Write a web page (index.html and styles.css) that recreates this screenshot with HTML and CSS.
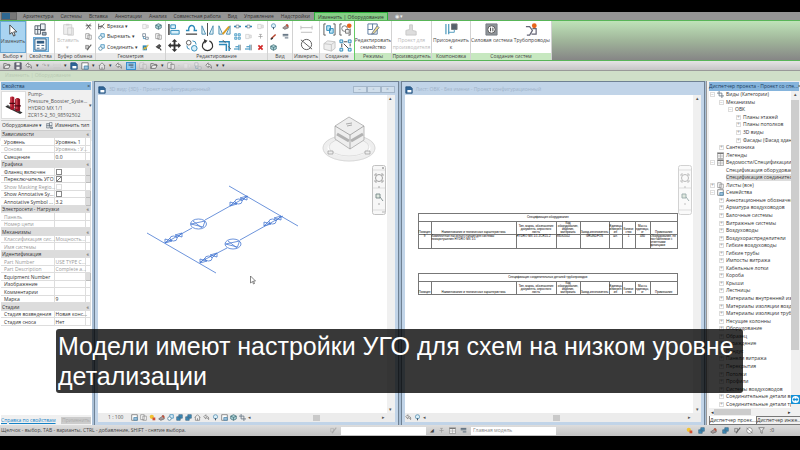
FILE: index.html
```html
<!DOCTYPE html>
<html lang="ru">
<head>
<meta charset="utf-8">
<title>Изменить | Оборудование</title>
<link rel="stylesheet" href="styles.css">
</head>
<body>
<svg class="defs" aria-hidden="true">
  <symbol id="cursor" viewBox="0 0 10 14"><path d="M1 1v10l2.500-2 1.600 4 1.700-.8-1.600-3.700h3.300z" fill="#fff" stroke="#444"/></symbol>
  <symbol id="types" viewBox="0 0 14 14"><path d="M1 3h6v9H1zM7 1h5v7H7z" fill="#eef3f7" stroke="#56616d"/><path d="M1 7h11M4 3v9M9 10h4v3H9z" fill="#9eb4c6" stroke="#56616d"/></symbol>
  <symbol id="props" viewBox="0 0 14 14"><path d="M1 1h12v12H1z" fill="#fff" stroke="#28567e"/><path d="M3 3h8v3H3z" fill="#315c82"/><path d="M3 8h3M3 11h3M8 8h3M8 11h3" stroke="#315c82"/></symbol>
  <symbol id="sheet" viewBox="0 0 14 14"><path d="M1 1h12v12H1z" fill="#eee" stroke="#777"/><path d="M1 2h12v2H1z" fill="#777"/><path d="M1 8h12M7 4v9" stroke="#999"/></symbol>
  <symbol id="paste" viewBox="0 0 14 16"><path d="M1 2h10v12H1zM6 6h7v9H6z" fill="#eee" stroke="#ccc"/><path d="M4 1h4v2H4z" fill="#ccc"/></symbol>
  <symbol id="x" viewBox="0 0 10 10"><path d="M2 1l6 8M8 1L2 9M1 4h8" stroke="#555" stroke-width="1.300" fill="none"/></symbol>
  <symbol id="copy" viewBox="0 0 10 10"><path d="M1 1h5v7H1zM4 3h5v6H4z" fill="#fff" stroke="#888"/></symbol>
  <symbol id="brush" viewBox="0 0 10 10"><path d="M1 2h4v5H1z" fill="#ccc" stroke="#777"/><path d="M9 1L5 6 3 9" stroke="#666" stroke-width="1.600" fill="none"/></symbol>
  <symbol id="cut" viewBox="0 0 10 10"><path d="M1 1v8M1 5h4M9 1L3 8M4 3l5 5" stroke="#555" stroke-width="1.300" fill="none"/></symbol>
  <symbol id="join" viewBox="0 0 10 10"><path d="M4 1h5v5H4z" fill="#d9edf8" stroke="#2c83b4"/><circle cx="3.500" cy="6.500" r="2.500" fill="#fff" stroke="#3c7695"/></symbol>
  <symbol id="cube" viewBox="0 0 10 10"><path d="M1 3l4-2 4 2v4L5 9 1 7z" fill="#a9cfd5" stroke="#3c6a73"/><path d="M1 3l4 2 4-2M5 5v4" stroke="#3c6a73" fill="none"/></symbol>
  <symbol id="pale" viewBox="0 0 10 10"><path d="M1 2h5v6H1zM7 3h2v4H7z" fill="#f5f5f5" stroke="#ccc"/></symbol>
  <symbol id="shapes" viewBox="0 0 10 10"><path d="M1 1h4v4H1zM5 6h4v3H5z" fill="#fff" stroke="#678"/><path d="M2 5v3h3" fill="none" stroke="#2878a8"/></symbol>
  <symbol id="paint" viewBox="0 0 10 10"><path d="M1 2h6v7H1z" fill="#2d86b8"/><path d="M2 8l2-3 1 2 4-6" stroke="#e1b83c" stroke-width="1.500" fill="none"/></symbol>
  <symbol id="hammer" viewBox="0 0 10 10"><path d="M2 4l4-3 2 2-3 3zM5 4l4 5" stroke="#444" stroke-width="1.500" fill="#666"/></symbol>
  <symbol id="align" viewBox="0 0 14 14"><path d="M1 1v12" stroke="#333" stroke-width="1.500"/><path d="M3 2h5v4H3zM3 8h9v4H3z" fill="#d9f0fa" stroke="#2c88b8"/></symbol>
  <symbol id="offset" viewBox="0 0 14 14"><path d="M1 8h3c-1-7 8-7 6 0h3" fill="none" stroke="#2c88b8" stroke-width="1.500"/><path d="M1 12h12" stroke="#555" stroke-width="1.500"/></symbol>
  <symbol id="mirror" viewBox="0 0 14 14"><path d="M1 12V3l4 9zM13 12V3L9 12z" fill="#e5f4fa" stroke="#4a8daf"/><path d="M7 0v14" stroke="#444"/></symbol>
  <symbol id="mirror2" viewBox="0 0 14 14"><path d="M1 12V3l4 9zM13 12V3L9 12z" fill="#e5f4fa" stroke="#4a8daf"/><path d="M12 4L5 12" stroke="#d89c25" stroke-width="2"/></symbol>
  <symbol id="move" viewBox="0 0 14 14"><path d="M7 0l3 3H8v3h3V4l3 3-3 3V8H8v3h2l-3 3-3-3h2V8H3v2L0 7l3-3v2h3V3H4z" fill="#333"/></symbol>
  <symbol id="copy2" viewBox="0 0 14 14"><circle cx="4" cy="4" r="2.500" fill="#fff" stroke="#555"/><circle cx="10" cy="10" r="3" fill="#d6effa" stroke="#2c88b8"/><path d="M8 2q4 0 4 4M2 7q0 4 3 4" fill="none" stroke="#2c88b8"/></symbol>
  <symbol id="rotate" viewBox="0 0 14 14"><path d="M9 2a5.500 5.500 0 1 1-4 0" fill="none" stroke="#333" stroke-width="1.300"/><path d="M3 0l4 2-3 3z" fill="#333"/></symbol>
  <symbol id="trim" viewBox="0 0 14 14"><path d="M1 3h11v10M1 6h8v7" fill="none" stroke="#2c88b8" stroke-width="1.600"/><path d="M5 1l3 3M11 8l3 3" stroke="#555"/></symbol>
  <symbol id="split" viewBox="0 0 10 10"><path d="M0 5h3M7 5h3" stroke="#2c88b8" stroke-width="2"/><path d="M3 3h4v4H3z" fill="#fff" stroke="#678"/></symbol>
  <symbol id="array" viewBox="0 0 10 10"><path d="M1 1h3v3H1zM6 1h3v3H6zM1 6h3v3H1zM6 6h3v3H6z" fill="#cbeaf8" stroke="#2c88b8"/></symbol>
  <symbol id="extend" viewBox="0 0 10 10"><path d="M0 7h6M7 1v8M2 4h4" stroke="#2c88b8" stroke-width="1.500"/><path d="M9 1v8" stroke="#666"/></symbol>
  <symbol id="pin" viewBox="0 0 10 10"><path d="M2 5h6M5 2v6M3 2h4" stroke="#999"/></symbol>
  <symbol id="del" viewBox="0 0 10 10"><path d="M2 2l6 6M8 2L2 8" stroke="#d22a2a" stroke-width="2.400"/></symbol>
  <symbol id="bulb" viewBox="0 0 10 10"><circle cx="5" cy="4" r="3" fill="#d9eef8" stroke="#4b87aa"/><path d="M5 6v3" stroke="#456" stroke-width="1.500"/></symbol>
  <symbol id="red" viewBox="0 0 10 10"><path d="M1 7l7-5 1 5-5 2z" fill="#a99" stroke="#666"/><path d="M6 2l3 3" stroke="#c64a32" stroke-width="2"/></symbol>
  <symbol id="pen" viewBox="0 0 10 10"><path d="M2 8l6-6" stroke="#b9462f" stroke-width="2"/><path d="M1 9l3-2" stroke="#333" stroke-width="2"/></symbol>
  <symbol id="list" viewBox="0 0 10 10"><path d="M1 2h8M1 4h8M4 7h5" stroke="#567" stroke-width="1.400"/></symbol>
  <symbol id="dim" viewBox="0 0 14 10"><path d="M1 3h12M1 1v4M13 1v4M1 8h12" stroke="#bbb"/></symbol>
  <symbol id="dia" viewBox="0 0 14 14"><circle cx="7" cy="7" r="5.500" fill="#fff" stroke="#555"/><path d="M1 2l12 10" stroke="#555"/></symbol>
  <symbol id="group" viewBox="0 0 14 14"><path d="M3 1H1v12h2M11 1h2v12h-2" fill="none" stroke="#555"/><path d="M4 3h4v5H4zM7 6h4v5H7z" fill="#bfe5f6" stroke="#2c88b8"/></symbol>
  <symbol id="group2" viewBox="0 0 14 14"><path d="M3 1H1v12h2M12 6v7h-2" fill="none" stroke="#555"/><circle cx="6" cy="6" r="3" fill="#fff" stroke="#777"/><path d="M7 7h4v4H7z" fill="#eee" stroke="#777"/><circle cx="11" cy="3" r="2.500" fill="#e8651c"/></symbol>
  <symbol id="box" viewBox="0 0 14 14"><path d="M1 5l4-3 8 1v7l-4 3-8-2z" fill="#eee" stroke="#c5c5c5"/><path d="M1 5l8 1 4-3M9 6v7" fill="none" stroke="#c5c5c5"/></symbol>
  <symbol id="net" viewBox="0 0 14 14"><path d="M1 1h3v3H1zM10 1h3v3h-3zM1 10h3v3H1zM10 10h3v3h-3z" fill="#d2edf8" stroke="#2c88b8"/><path d="M5 3h4M3 5v4M5 5l5 5M12 5v3" stroke="#444"/></symbol>
  <symbol id="family" viewBox="0 0 14 14"><path d="M1 1h10v11H1z" fill="#fff" stroke="#56779c"/><path d="M6 1v6H1" fill="none" stroke="#56779c"/><path d="M6 10l5-7 2 2-5 6-3 1z" fill="#eedc8e" stroke="#6d7895"/></symbol>
  <symbol id="maker" viewBox="0 0 14 14"><path d="M1 12V8l4-1V2h3v6l4 1v4H1z" fill="#ddd" stroke="#c8c8c8"/></symbol>
  <symbol id="connect" viewBox="0 0 14 14"><path d="M1 1v11M4 1v11" stroke="#4b98bc" stroke-width="1.300"/><path d="M7 1h6v6H7z" fill="#56616b" stroke="#777"/><path d="M4 10h6V7" stroke="#4b98bc" fill="none"/></symbol>
  <symbol id="power" viewBox="0 0 14 14"><path d="M1 1h12v12H1z" fill="#8f9499" stroke="#767b80"/><circle cx="7" cy="7" r="4" fill="#fff" stroke="#555"/><path d="M6 5v4M8.500 5v4" stroke="#333"/></symbol>
  <symbol id="pipe" viewBox="0 0 14 14"><path d="M1 4h4l3 4-3 5H2M7 12h5V6H8" fill="#fff" stroke="#667" stroke-width="1.300"/><circle cx="10" cy="3" r="2.600" fill="#e8651c"/></symbol>
  <symbol id="open" viewBox="0 0 10 10"><path d="M1 8V2h3l1 1h3v2M1 8l2-4h6L7 8z" fill="#eee" stroke="#666"/></symbol>
  <symbol id="save" viewBox="0 0 10 10"><path d="M1 1h8v8H1z" fill="#667" stroke="#556"/><path d="M3 1h4v3H3zM3 6h4v3H3z" fill="#eee"/></symbol>
  <symbol id="undo" viewBox="0 0 10 10"><path d="M1 4l3-3v2q5 0 4 5-1-3-4-3v2z" fill="#eee" stroke="#777"/></symbol>
  <symbol id="house" viewBox="0 0 10 10"><path d="M1 5l4-4 4 4M2 4v5h6V4M5 9V6" fill="#eee" stroke="#777"/></symbol>
  <symbol id="view" viewBox="0 0 10 10"><path d="M1 1h8v8H1z" fill="#fff" stroke="#666"/><path d="M4 5h5v4H4z" fill="#9cc3dd" stroke="#4783a8"/></symbol>
  <symbol id="rev" viewBox="0 0 10 10"><path d="M1 1h6l2 2v6H1z" fill="#2f6598" stroke="#234f7a"/><path d="M3 5h5v3H3z" fill="#fff"/></symbol>
  <symbol id="sun" viewBox="0 0 10 10"><circle cx="4" cy="4" r="3" fill="#f1c232"/><path d="M5 5h4v4H5z" fill="#d24f31"/></symbol>
  <symbol id="blue" viewBox="0 0 10 10"><path d="M1 4h5v5H1zM4 1h5v5H4z" fill="#3a8cbb" stroke="#456b86"/></symbol>
  <symbol id="crop" viewBox="0 0 10 10"><path d="M3 0v7h7M0 3h7v7" fill="none" stroke="#687684" stroke-width="1.200"/></symbol>
  <symbol id="funnel" viewBox="0 0 10 10"><path d="M1 1h8L6 5v4L4 8V5z" fill="#eee" stroke="#666"/></symbol>
</svg>

<div class="app">
  <nav class="tabs">
    <button class="app-button" aria-label="Меню приложения"></button>
    <a href="#">Архитектура</a><a href="#">Системы</a><a href="#">Вставка</a><a href="#">Аннотации</a><a href="#">Анализ</a><a href="#">Совместная работа</a><a href="#">Вид</a><a href="#">Управление</a><a href="#">Надстройки</a><a href="#" class="current">Изменить | Оборудование</a><span class="tab-more">◉ ▾</span>
  </nav>

  <div class="ribbon">
    <section class="panel w-select"><div class="tools"><button class="big selected"><svg><use href="#cursor"/></svg>Изменить</button></div><h2>Выбор ▾</h2></section>
    <section class="panel w-props"><div class="tools col"><button class="icon" aria-label="Свойства типа"><svg><use href="#types"/></svg></button><button class="icon selected" aria-label="Свойства"><svg><use href="#props"/></svg></button></div><h2>Свойства</h2></section>
    <section class="panel w-clip"><div class="tools"><button class="big off"><svg><use href="#paste"/></svg>Вставить<br>▾</button><div class="grid one"><svg><use href="#x"/></svg><svg><use href="#copy"/></svg><svg><use href="#brush"/></svg></div></div><h2>Буфер обмена</h2></section>
    <section class="panel w-geom"><div class="tools"><div class="lines"><button><svg><use href="#cut"/></svg>Врезка ▾</button><button><svg><use href="#join"/></svg>Вырезать ▾</button><button><svg><use href="#join"/></svg>Соединить ▾</button></div><div class="grid two"><svg><use href="#pale"/></svg><svg><use href="#cube"/></svg><svg><use href="#shapes"/></svg><svg><use href="#copy"/></svg><svg><use href="#paint"/></svg><svg><use href="#hammer"/></svg></div></div><h2>Геометрия</h2></section>
    <section class="panel w-edit"><div class="tools"><div class="grid large"><svg><use href="#align"/></svg><svg><use href="#offset"/></svg><svg><use href="#mirror"/></svg><svg><use href="#mirror2"/></svg><svg><use href="#move"/></svg><svg><use href="#copy2"/></svg><svg><use href="#rotate"/></svg><svg><use href="#trim"/></svg></div><div class="grid three"><svg><use href="#split"/></svg><svg><use href="#split"/></svg><svg><use href="#pale"/></svg><svg><use href="#array"/></svg><svg><use href="#pale"/></svg><svg><use href="#pin"/></svg><svg><use href="#extend"/></svg><svg><use href="#extend"/></svg><svg><use href="#del"/></svg></div></div><h2>Редактирование</h2></section>
    <section class="panel w-view"><div class="tools"><div class="grid two"><svg><use href="#bulb"/></svg><svg><use href="#red"/></svg><svg><use href="#pen"/></svg><svg><use href="#list"/></svg><svg><use href="#cube"/></svg></div></div><h2>Вид</h2></section>
    <section class="panel w-measure"><div class="tools col"><button class="icon" aria-label="Размер"><svg><use href="#dim"/></svg></button><button class="icon" aria-label="Диаметр"><svg><use href="#dia"/></svg></button></div><h2>Измерить</h2></section>
    <section class="panel w-create"><div class="tools"><div class="grid large pair"><svg><use href="#group"/></svg><svg><use href="#group2"/></svg><svg><use href="#box"/></svg><svg><use href="#net"/></svg></div></div><h2>Создание</h2></section>
    <section class="panel context w-mode"><div class="tools"><button class="big"><svg><use href="#family"/></svg>Редактировать<br>семейство</button></div><h2>Режимы</h2></section>
    <section class="panel context w-maker"><div class="tools"><button class="big off"><svg><use href="#maker"/></svg>Проект для<br>производителя</button></div><h2>Производитель</h2></section>
    <section class="panel context w-layout"><div class="tools"><button class="big"><svg><use href="#connect"/></svg>Присоединить<br>к</button></div><h2>Компоновка</h2></section>
    <section class="panel context w-systems"><div class="tools"><button class="big"><svg><use href="#power"/></svg>Силовая система</button><button class="big"><svg><use href="#pipe"/></svg>Трубопроводы</button></div><h2>Создание систем</h2></section>
  </div>

  <div class="quick">
    <svg><use href="#open"/></svg><svg><use href="#save"/></svg><svg><use href="#undo"/></svg><i>▾</i><i class="faint">↷ ▾</i><svg class="faint"><use href="#dim"/></svg><i>▾</i><svg><use href="#rev"/></svg><svg><use href="#view"/></svg><i>▾</i><svg><use href="#house"/></svg><i>▾</i><svg><use href="#undo"/></svg><svg class="on"><use href="#list"/></svg><svg class="faint"><use href="#copy"/></svg><svg><use href="#open"/></svg><i>▾</i><svg><use href="#copy"/></svg><i class="faint">·</i><svg class="faint"><use href="#pale"/></svg><svg class="faint"><use href="#shapes"/></svg><svg><use href="#undo"/></svg><i>▾</i><i>▾</i>
  </div>
  <div class="options">Изменить | Оборудование</div>

  <main>
    <aside class="properties">
      <header>Свойства<button aria-label="Закрыть свойства">×</button></header>
      <div class="type">
        <svg viewBox="0 0 28 28"><path d="M4 16l3-2 18 9-3 2z" fill="#333"/><path d="M6 14l14 8" stroke="#888"/><path d="M10 5q3-3 5 0v14q-3 2-5 0z" fill="#a5182b"/><path d="M16 7q3-3 6 0v14q-3 2-6 0z" fill="#8c1022"/><path d="M11 4v12M18 6v13" stroke="#d94b58" stroke-width="1.500"/><path d="M9 12h7M15 15h8" stroke="#4d0812" stroke-width="1.500"/></svg>
        <p>Pump-<br>Pressure_Booster_Syste...<br>HYDRO MX 1/1<br>ZCR15-2_50_98592502</p><b>▾</b>
      </div>
      <div class="pick"><select aria-label="Категория"><option>Оборудование</option></select><i>▾</i><button><svg><use href="#types"/></svg>Изменить тип</button></div>
      <table>
        <colgroup><col class="name"><col><col class="side"></colgroup>
        <tr class="head"><th colspan="2">Зависимости</th><td>«</td></tr>
        <tr><th>Уровень</th><td>Уровень 1</td><td></td></tr>
        <tr class="off"><th>Основа</th><td>Уровень : У...</td><td></td></tr>
        <tr><th>Смещение</th><td>0.0</td><td></td></tr>
        <tr class="head"><th colspan="2">Графика</th><td>«</td></tr>
        <tr><th>Фланец включен</th><td><input type="checkbox" aria-label="Фланец включен"></td><td class="knob"></td></tr>
        <tr><th>Переключатель УГО</th><td><input type="checkbox" checked aria-label="Переключатель УГО"></td><td class="knob"></td></tr>
        <tr class="off"><th>Show Masking Regio...</th><td><input type="checkbox" disabled aria-label="Show Masking Region"></td><td></td></tr>
        <tr><th>Show Annotative Sy...</th><td><input type="checkbox" aria-label="Show Annotative Symbol"></td><td class="knob"></td></tr>
        <tr><th>Annotative Symbol ...</th><td>3.2</td><td class="knob"></td></tr>
        <tr class="head"><th colspan="2">Электросети - Нагрузки</th><td>«</td></tr>
        <tr class="off"><th>Панель</th><td></td><td></td></tr>
        <tr class="off"><th>Номер цепи</th><td></td><td></td></tr>
        <tr class="head"><th colspan="2">Механизмы</th><td>«</td></tr>
        <tr class="off"><th>Классификация сис...</th><td>Мощность...</td><td></td></tr>
        <tr class="off"><th>Имя системы</th><td></td><td></td></tr>
        <tr class="head"><th colspan="2">Идентификация</th><td>«</td></tr>
        <tr class="off"><th>Part Number</th><td>USE TYPE C...</td><td></td></tr>
        <tr class="off"><th>Part Description</th><td>Complete a...</td><td></td></tr>
        <tr><th>Equipment Number</th><td></td><td class="knob"></td></tr>
        <tr><th>Изображение</th><td></td><td></td></tr>
        <tr><th>Комментарии</th><td></td><td></td></tr>
        <tr><th>Марка</th><td>9</td><td></td></tr>
        <tr class="head"><th colspan="2">Стадии</th><td>«</td></tr>
        <tr><th>Стадия возведения</th><td>Новая конс...</td><td></td></tr>
        <tr><th>Стадия сноса</th><td>Нет</td><td></td></tr>
      </table>
      <footer><a href="#">Справка по свойствам</a><button disabled>Применить</button></footer>
    </aside>

    <section class="window">
      <header><svg><use href="#rev"/></svg><span>3D вид: {3D} - Проект конфигурационный</span><button aria-label="Свернуть">–</button><button aria-label="Развернуть">▫</button><button aria-label="Закрыть">×</button></header>
      <div class="canvas">
        <svg class="scheme" viewBox="140 180 170 110">
          <g fill="none" stroke="#4878d2" stroke-width=".8">
            <path d="M147 233l69 40M229 186l69 40M165 243l27-15M205 220l43-24M200 262l27-14M240 240l43-24"/>
            <ellipse cx="198.500" cy="224" rx="8" ry="5"/><path d="M191 224l14-3-2 6zM193 221l9 7"/>
            <ellipse cx="233" cy="244" rx="8" ry="5"/><path d="M225.500 244l14-3-2 6zM228 241l9 7"/>
            <g id="fit"><path d="M165 243v-4l7 2zM165 243l5-5M182 233v4l-7-2zM182 233l-5 5"/><ellipse cx="173.500" cy="238.500" rx="3.500" ry="2.500"/></g>
            <use href="#fit" x="35" y="20"/><use href="#fit" x="65" y="-37"/><use href="#fit" x="99" y="-17"/>
          </g>
          <path d="M250.500 276v7l2-1.500 1 2.500 1-.5-1-2.500h2z" fill="#fff" stroke="#555" stroke-width=".7"/>
        </svg>
        <svg class="cube" viewBox="324 114 54 48">
          <ellipse cx="351" cy="148" rx="24" ry="11" fill="none" stroke="#eee" stroke-width="5"/><ellipse cx="351" cy="148" rx="26" ry="13" fill="none" stroke="#d0d0d0" stroke-width=".7"/><ellipse cx="351" cy="147" rx="20" ry="9" fill="#f4f4f4" stroke="#d4d4d4" stroke-width=".7"/>
          <path d="M337 126l14-9 15 9v14l-14 9-15-10z" fill="#eee" stroke="#aaa" stroke-width=".8"/><path d="M337 126l15 9 14-9M352 135v14" fill="none" stroke="#999" stroke-width=".8"/><path d="M339 134l12 7M353 141l12-7" stroke="#b2b2b2" stroke-width="3"/><path d="M348 124l6-1M349 126l5-1" stroke="#aaa"/>
          <path d="M330 151h5v3h-5zM367 151h5v3h-5z" fill="#eee" stroke="#999" stroke-width=".7"/>
        </svg>
        <svg class="nav" viewBox="0 0 14 50"><rect x=".5" y=".5" width="13" height="49" rx="2" fill="#f7f7f7" stroke="#c2c2c2"/><path d="M1 5h12M1 23h12M1 45h12" stroke="#ddd"/><path d="M10 2l2 2M12 2l-2 2M10 47h3" stroke="#888" stroke-width=".6"/><circle cx="7" cy="13" r="3.500" fill="none" stroke="#888" stroke-width=".8"/><path d="M3 9h2M3 9v2M11 9H9M11 9v2M3 17h2M3 17v-2M11 17H9M11 17v-2M6 22h2M6 39h2" stroke="#888" stroke-width=".7"/><path d="M4 29h4v4H4zM8 32l3 4" fill="#dfe8df" stroke="#788" stroke-width=".9"/></svg>
        <div class="vscroll"><i>▴</i><i>▾</i></div>
      </div>
      <footer><span class="scale">1 : 100</span><svg><use href="#view"/></svg><svg><use href="#copy"/></svg><svg><use href="#sun"/></svg><svg><use href="#red"/></svg><svg><use href="#join"/></svg><svg><use href="#blue"/></svg><svg><use href="#blue"/></svg><svg><use href="#house"/></svg><svg><use href="#undo"/></svg><svg><use href="#bulb"/></svg><svg><use href="#view"/></svg><svg><use href="#cube"/></svg><svg><use href="#crop"/></svg><i>◂</i><b></b><i>▸</i></footer>
    </section>

    <section class="window second">
      <header><svg><use href="#rev"/></svg><span>Лист: ОВК - Без имени - Проект конфигурационный</span></header>
      <div class="canvas">
        <div class="sheet">
          <table class="spec">
            <colgroup><col class="c1"><col class="c2"><col class="c3"><col class="c4"><col class="c5"><col class="c6"><col class="c6"><col class="c7"><col></colgroup>
            <tr><th colspan="9" class="cap">Спецификация оборудования</th></tr>
            <tr class="names"><th>Позиция</th><th>Наименование и техническая характеристика</th><th>Тип, марка, обозначение документа, опросного листа</th><th>Код оборудования, изделия, материала</th><th>Завод-изготовитель</th><th>Единица измерен ия</th><th>Количе ство</th><th>Масса единицы, кг</th><th>Примечание</th></tr>
            <tr class="data"><td>9</td><td class="l">Комплектная насосная станция для системы пожаротушения HYDRO MX 1/1</td><td class="l">HYDRO MX 1/1 ZCR15-2</td><td class="l">98592502</td><td>GRUNDFOS</td><td>шт.</td><td>1</td><td>480</td><td class="l">Оборудование, не поставляемое с ответными фланцами</td></tr>
          </table>
          <table class="spec">
            <colgroup><col class="c1"><col class="c2"><col class="c3"><col class="c4"><col class="c5"><col class="c6"><col class="c6"><col class="c7"><col></colgroup>
            <tr><th colspan="9" class="cap">Спецификация соединительных деталей трубопроводов</th></tr>
            <tr class="names"><th>Позиция</th><th>Наименование и техническая характеристика</th><th>Тип, марка, обозначение документа, опросного листа</th><th>Код оборудования, изделия, материала</th><th>Завод-изготовитель</th><th>Единица измерен ия</th><th>Количе ство</th><th>Масса единицы, кг</th><th>Примечание</th></tr>
          </table>
        </div>
        <svg class="nav" viewBox="0 0 14 50"><rect x=".5" y=".5" width="13" height="49" rx="2" fill="#fafafa" stroke="#d2d2d2"/><path d="M1 5h12M1 23h12M1 45h12" stroke="#ddd"/><circle cx="7" cy="13" r="3.500" fill="none" stroke="#aaa" stroke-width=".8"/><path d="M3 9h2M3 9v2M11 9H9M11 9v2M3 17h2M3 17v-2M11 17H9M11 17v-2M6 22h2M6 39h2" stroke="#aaa" stroke-width=".7"/><path d="M4 29h4v4H4zM8 32l3 4" fill="#dfe8df" stroke="#9aa" stroke-width=".9"/></svg>
        <div class="vscroll"><i>▴</i><i>▾</i></div>
      </div>
      <footer><svg><use href="#undo"/></svg><svg><use href="#bulb"/></svg><i>◂</i><b></b><i>▸</i></footer>
    </section>

    <aside class="browser">
      <header>Диспетчер проекта - Проект со спе...<button aria-label="Закрыть диспетчер">×</button></header>
      <div class="tree">
        <ul>
          <li class="l0"><i>−</i><svg><use href="#crop"/></svg>Виды (Категории)</li>
          <li class="l1"><i>−</i>Механизмы</li>
          <li class="l2"><i>−</i>ОВК</li>
          <li class="l3"><i>+</i>Планы этажей</li>
          <li class="l3"><i>+</i>Планы потолков</li>
          <li class="l3"><i>+</i>3D виды</li>
          <li class="l3"><i>+</i>Фасады (Фасад здания)</li>
          <li class="l1"><i>+</i>Сантехника</li>
          <li class="l0"><i class="none"></i><svg><use href="#sheet"/></svg>Легенды</li>
          <li class="l0"><i>−</i><svg><use href="#sheet"/></svg>Ведомости/Спецификации</li>
          <li class="l1"><i class="none"></i>Спецификация оборудования</li>
          <li class="l1"><i class="none"></i><mark>Спецификация соединительных</mark></li>
          <li class="l0"><i>+</i><svg><use href="#copy"/></svg>Листы (все)</li>
          <li class="l0"><i>−</i><svg><use href="#view"/></svg>Семейства</li>
          <li class="l1"><i>+</i>Аннотационные обозначения</li>
          <li class="l1"><i>+</i>Арматура воздуховодов</li>
          <li class="l1"><i>+</i>Балочные системы</li>
          <li class="l1"><i>+</i>Витражные системы</li>
          <li class="l1"><i>+</i>Воздуховоды</li>
          <li class="l1"><i>+</i>Воздухораспределители</li>
          <li class="l1"><i>+</i>Гибкие воздуховоды</li>
          <li class="l1"><i>+</i>Гибкие трубы</li>
          <li class="l1"><i>+</i>Импосты витража</li>
          <li class="l1"><i>+</i>Кабельные лотки</li>
          <li class="l1"><i>+</i>Короба</li>
          <li class="l1"><i>+</i>Крыши</li>
          <li class="l1"><i>+</i>Лестницы</li>
          <li class="l1"><i>+</i>Материалы внутренней изоляции</li>
          <li class="l1"><i>+</i>Материалы изоляции воздуховодов</li>
          <li class="l1"><i>+</i>Материалы изоляции труб</li>
          <li class="l1"><i>+</i>Несущие колонны</li>
          <li class="l1"><i>+</i>Оборудование</li>
          <li class="l1"><i>+</i>Образец</li>
          <li class="l1"><i>+</i>Ограждение</li>
          <li class="l1"><i>+</i>Пандус</li>
          <li class="l1"><i>+</i>Панели витража</li>
          <li class="l1"><i>+</i>Перекрытия</li>
          <li class="l1"><i>+</i>Потолки</li>
          <li class="l1"><i>+</i>Профили</li>
          <li class="l1"><i>+</i>Системы воздуховодов</li>
          <li class="l1"><i>+</i>Соединительные детали воздуховодов</li>
          <li class="l1"><i>+</i>Соединительные детали трубопроводов</li>
        </ul>
        <div class="vscroll"><i>▴</i><b></b></div>
        <svg class="badge" viewBox="0 0 9 9"><path d="M0 0h9v9H0z" fill="#138fd6"/><circle cx="4.500" cy="4.500" r="3.500" fill="#fff"/><path d="M1.500 4.500l2-2v1.200h2V2.500l2 2-2 2V5.300h-2v1.200z" fill="#138fd6"/></svg>
      </div>
      <div class="hscroll"><i>◂</i><b></b><i>▸</i></div>
      <footer><button class="open">Диспетчер проек...</button><button>Диспетчер инже...</button></footer>
    </aside>
  </main>

  <div class="status">
    <span class="hint">Щелчок - выбор, TAB - варианты, CTRL - добавление, SHIFT - снятие выбора.</span>
    <svg class="faint"><use href="#brush"/></svg><input type="text" aria-label="Рабочий набор"><i>◢</i><svg><use href="#pin"/></svg><svg><use href="#sheet"/></svg><svg><use href="#list"/></svg>
    <select aria-label="Вариант"><option>Главная модель</option></select>
    <div class="toggles"><svg><use href="#sun"/></svg><svg><use href="#blue"/></svg><svg><use href="#red"/></svg><svg><use href="#blue"/></svg><svg><use href="#brush"/></svg><svg><use href="#dia"/></svg><svg><use href="#funnel"/></svg>:0</div>
  </div>

  <p class="caption">Модели имеют настройки УГО для схем на низком уровне детализации</p>
</div>
</body>
</html>
```
FILE: styles.css
```css
* { box-sizing: border-box; }
body { margin: 0; background: #000; color: #333; font: 5px/7px "Open Sans", "Noto Sans", sans-serif; }
h2, p, ul { margin: 0; padding: 0; font: inherit; }
i, b { font-style: normal; font-weight: normal; }
button, select, input { font: inherit; color: inherit; margin: 0; padding: 0; border: 0; background: none; border-radius: 0; appearance: none; }
a { color: inherit; text-decoration: none; }
svg { display: block; width: 7px; height: 7px; flex: none; }
.defs { position: absolute; width: 0; height: 0; }
.app { position: relative; display: flex; flex-direction: column; height: 100vh; padding: 12px 0 14px; overflow: hidden; }

/* Ribbon tabs */
.tabs { display: flex; align-items: center; gap: 7px; height: 8px; background: #949494; white-space: nowrap; flex: none; }
.app-button { width: 16px; height: 8px; margin: 0 -1px 0 1px; background: linear-gradient(90deg, #2e6790 55%, #777 55%); border: 1px solid #666; }
.tabs .current { margin: 0 0 0 -3px; padding: 0 3px; background: #86cf86; border: 1px solid #2fae3d; border-bottom: 0; line-height: 8px; }
.tab-more { color: #eee; }

/* Ribbon */
.ribbon { display: flex; height: 41px; flex: none; border: solid #58b558; border-width: 1px 0; background: linear-gradient(#bfe3b9, #a0b59a 50%, #868686); }
.panel { display: flex; flex-direction: column; flex: none; background: #fff; border-right: 1px solid #d2d2d2; overflow: hidden; white-space: nowrap; }
.panel h2 { height: 7px; background: #e9e9e9; text-align: center; color: #444; }
.context h2 { background: #c7e8c0; }
.tools { display: flex; flex: 1; align-items: stretch; justify-content: center; min-height: 0; }
.tools.col { flex-direction: column; align-items: center; }
.big { display: flex; flex: 1; flex-direction: column; align-items: center; justify-content: flex-start; padding-top: 2px; color: #444; line-height: 7px; }
.big svg { width: 13px; height: 13px; margin-bottom: 1px; }
.off { color: #bbb; }
.selected { background: #a9d4f1; border: 1px solid #6aa9d6; }
.icon { display: grid; place-items: center; width: 16px; height: 15px; }
.icon svg { width: 13px; height: 13px; }
.grid { display: grid; align-content: space-around; justify-content: space-around; }
.one { width: 14px; }
.two { width: 26px; grid-template-columns: 8px 8px; }
.three { width: 34px; grid-template-columns: 8px 8px 8px; }
.large { width: 66px; grid-template-columns: repeat(4, 13px); }
.pair { width: 32px; grid-template-columns: 13px 13px; }
.large svg { width: 13px; height: 13px; }
.lines { display: flex; flex: 1; flex-direction: column; justify-content: space-around; padding-left: 2px; }
.lines button { display: flex; align-items: center; gap: 2px; }
.w-select { width: 27px; }
.w-props { width: 28px; }
.w-clip { width: 41px; }
.w-geom { width: 70px; }
.w-edit { width: 102px; }
.w-view { width: 25px; }
.w-measure { width: 27px; }
.w-create { width: 35px; border-right-color: #6c6; }
.w-mode { width: 37px; }
.w-maker { width: 40px; }
.w-layout { width: 39px; }
.w-systems { width: 81px; }

/* Toolbars */
.quick { display: flex; align-items: center; gap: 3px; height: 10px; padding: 0 3px; background: linear-gradient(#e4e4e4, #c6c6c6); border-bottom: 1px solid #999; flex: none; }
.quick svg { width: 8px; height: 8px; }
.quick .on { width: 10px; background: #8fc8ef; border: 1px solid #3a8fce; }
.faint { opacity: .35; }
.options { height: 10px; padding: 1px 5px; background: #cfdfc8; color: #b9c9b3; flex: none; }

/* Workspace */
main { display: flex; flex: 1; min-height: 0; background: #a9bfd6; }
main header { display: flex; align-items: center; white-space: nowrap; flex: none; }
.properties { display: flex; flex-direction: column; width: 92px; padding: 1px 1px 0; background: linear-gradient(#f0f0f0 60px, #fff 60px); flex: none; }
.properties header, .browser header { height: 8px; padding: 0 1px; background: #85b4dc; color: #1c3c5c; }
.properties header button, .browser header button { margin-left: auto; color: #222; }
.type { display: flex; align-items: center; height: 30px; gap: 2px; color: #555; }
.type svg { width: 25px; height: 28px; background: #fff; border: 1px solid #ddd; }
.type p { flex: 1; white-space: nowrap; }
.pick { display: flex; align-items: center; height: 11px; border: 1px solid #ccc; border-width: 1px 0; }
.pick select { width: 38px; padding-left: 1px; }
.pick button { display: flex; align-items: center; gap: 2px; margin-left: 4px; white-space: nowrap; }
.properties table { width: 100%; height: 195px; flex: none; table-layout: fixed; border-collapse: collapse; background: #fff; }
.name { width: 53px; }
.side { width: 5px; }
.properties th, .properties td { padding: 0 0 0 1px; border: 0 solid #ddd; border-width: 0 1px 1px 0; text-align: left; font-weight: normal; line-height: 6px; white-space: nowrap; }
.properties th { padding-left: 3px; }
.properties .off th, .properties .off td { color: #999; }
.properties .head th, .properties .head td { padding-left: 1px; background: #dcdcdc; border-right: 0; color: #333; }
.properties .knob { background: #ddd; border: 1px solid #bbb; }
input[type="checkbox"] { display: block; width: 6px; height: 6px; border: 1px solid #888; background: #fff; }
input[type="checkbox"]:checked { background: linear-gradient(135deg, #fff 40%, #777 40% 60%, #fff 60%); }
input[type="checkbox"]:disabled { border-color: #ddd; }
.properties footer { display: flex; align-items: center; justify-content: space-between; margin-top: auto; height: 10px; background: #f0f0f0; white-space: nowrap; }
.properties footer a { color: #1683c7; text-decoration: underline; }
.properties footer button { width: 30px; background: #ccc; color: #aaa; }

.window { display: flex; flex: 1; flex-direction: column; min-width: 0; margin-left: 2px; padding: 2px 3px 3px; border: 1px solid #6f8193; border-bottom: 0; background: #c1d4e8; }
.window header { height: 11px; gap: 3px; color: #a0b3c8; }
.window header svg { width: 8px; height: 8px; }
.window header span { flex: 1; }
.window header button { width: 14px; height: 7px; margin-left: -3px; border: 1px solid #a5b7ca; background: #d0deeb; color: #8ba0b5; line-height: 5px; }
.canvas { position: relative; flex: 1; min-height: 0; background: #fff; }
.scheme { position: absolute; left: 42px; top: 85px; width: 170px; height: 110px; }
.cube { position: absolute; right: 19px; top: 19px; width: 54px; height: 48px; }
.nav { position: absolute; right: 9px; top: 70px; width: 14px; height: 50px; }
.vscroll { position: absolute; right: 0; top: 0; bottom: 0; display: flex; flex-direction: column; justify-content: space-between; width: 8px; background: #f0f0f0; text-align: center; color: #555; }
.window footer { display: flex; align-items: center; gap: 2px; height: 9px; padding: 0 10px 0 4px; background: #ececec; color: #555; flex: none; }
.window footer b { width: 7px; height: 6px; margin: 0 auto; background: #c9c9c9; }
.scale { width: 27px; padding-left: 6px; }
.second footer { padding-left: 0; }
.sheet { display: flex; flex-direction: column; gap: 24px; padding: 118px 23px 0 13px; }
.spec { width: 100%; table-layout: fixed; border-collapse: collapse; font: 3px/3px "Liberation Sans", sans-serif; color: #000; }
.spec th, .spec td { padding: 0; border: 1px solid #777; font-weight: normal; text-align: center; vertical-align: bottom; }
.spec .cap { height: 8px; vertical-align: middle; }
.names { height: 13px; }
.data { height: 14px; }
.spec .data td { vertical-align: top; }
.spec .data .l { text-align: left; }
.c1 { width: 13px; }
.c2 { width: 85px; }
.c3 { width: 40px; }
.c4 { width: 24px; }
.c5 { width: 29px; }
.c6 { width: 13px; }
.c7 { width: 15px; }

/* Project browser */
.browser { display: flex; flex-direction: column; width: 94px; margin-left: 1px; padding: 1px 1px 0 2px; background: #f0f0f0; border-left: 1px solid #999; flex: none; }
.browser header { height: 9px; padding: 0; }
.tree { position: relative; display: flex; flex: 1; min-height: 0; background: #fff; }
.tree ul { display: flex; flex: 1; flex-direction: column; min-width: 0; margin-right: 8px; overflow: hidden; list-style: none; }
.tree li { display: flex; align-items: center; flex: 1 1 0; min-height: 0; gap: 2px; line-height: 7px; white-space: nowrap; }
.tree li i { display: grid; place-items: center; width: 5px; height: 5px; border: 1px solid #ddd; color: #999; line-height: 3px; flex: none; }
.tree li .none { visibility: hidden; }
.l0 { padding-left: 1px; }
.l1 { padding-left: 10px; }
.l2 { padding-left: 19px; }
.l3 { padding-left: 27px; }
.tree mark { background: #ddd; color: inherit; }
.tree .vscroll { justify-content: flex-start; gap: 2px; }
.tree .vscroll b { height: 250px; background: #cdcdcd; }
.badge { position: absolute; right: -1px; bottom: 4px; width: 9px; height: 9px; }
.hscroll { display: flex; align-items: center; justify-content: space-between; height: 8px; padding: 0 8px 0 2px; flex: none; }
.hscroll b { width: 37px; height: 6px; margin-right: auto; background: #ccc; }
.browser footer { display: flex; height: 9px; flex: none; }
.browser footer button { flex: 1 1 auto; border: solid #777; border-width: 1px 0 1px 1px; white-space: nowrap; }
.browser footer .open { background: #fff; border-top: 0; }

/* Status bar */
.status { display: flex; align-items: center; gap: 4px; height: 11px; background: linear-gradient(#ddd, #c2c2c2); color: #444; flex: none; }
.hint { width: 326px; padding-left: 1px; white-space: nowrap; }
.status input, .status select { width: 85px; height: 8px; background: #fff; color: #888; }
.status select { padding-left: 2px; }
.toggles { display: flex; align-items: center; gap: 5px; margin-left: auto; padding-right: 26px; }

.caption { position: absolute; left: 56px; right: 57px; bottom: 57px; padding: 2px; border-radius: 3px; background: rgba(0, 0, 0, .78); color: #fff; font: 25px/30px "Liberation Sans", Arial, sans-serif; }
```
